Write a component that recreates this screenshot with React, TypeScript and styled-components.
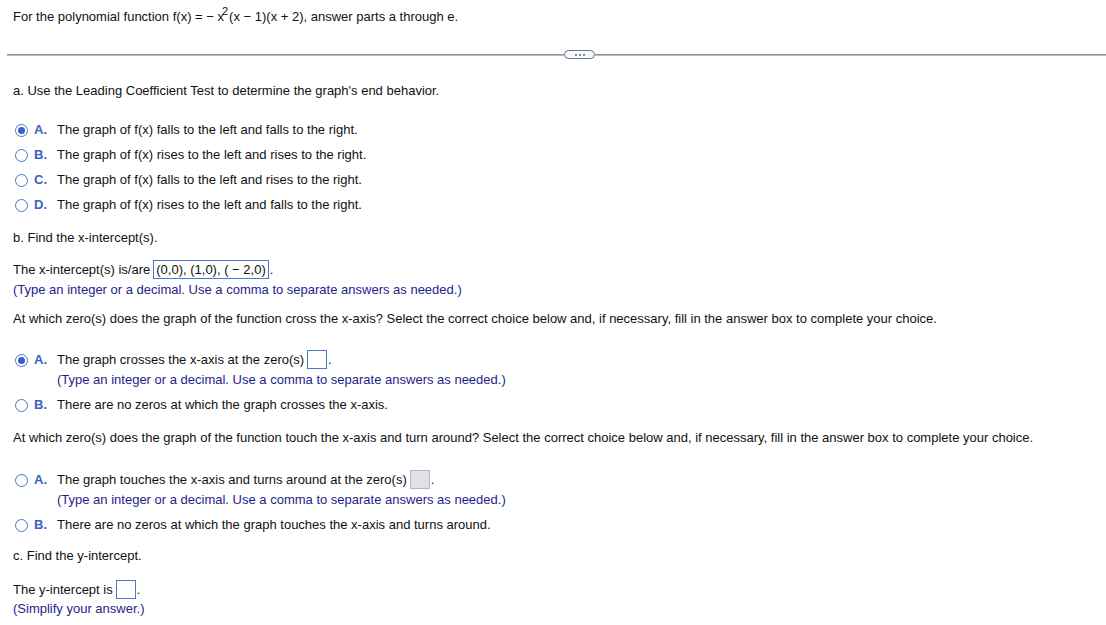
import React from "react";
import styled, { createGlobalStyle } from "styled-components";

const Global = createGlobalStyle`
  html, body { margin: 0; padding: 0; background: #fff; }
  body { font-family: "Liberation Sans", Arial, sans-serif; font-size: 13px; color: #111; }
`;

const Page = styled.div`
  padding: 7px 0 0 13px;
  width: 1106px;
  box-sizing: border-box;
`;

const Line = styled.div<{ $mt?: number }>`
  line-height: 20px;
  height: 20px;
  margin-top: ${(p) => p.$mt ?? 0}px;
  white-space: nowrap;
`;

const Hint = styled(Line)`
  color: #25238a;
`;

const Sup = styled.sup`
  font-size: 11px;
  vertical-align: 6px;
  line-height: 0;
  margin-left: -2px;
  margin-right: 1px;
`;

const Divider = styled.div`
  display: grid;
  grid-template-columns: 557px 31px 1fr;
  align-items: center;
  margin: 23px 0 0 -6px;
  height: 9px;
`;

const Rule = styled.div`
  height: 1px;
  background: #8a92a0;
  border-bottom: 0.5px solid #b4bac4;
`;

const Pill = styled.div`
  height: 7px;
  border: 1px solid #6c7686;
  border-radius: 5px;
  background: #f8f9fb;
  display: flex;
  align-items: center;
  justify-content: center;
  gap: 2px;
`;

const Dot = styled.span`
  width: 2px;
  height: 2px;
  background: #5d6676;
  border-radius: 1px;
`;

const Options = styled.div<{ $mt?: number }>`
  display: flex;
  flex-direction: column;
  gap: 5px;
  margin-top: ${(p) => p.$mt ?? 0}px;
`;

const Option = styled.div`
  display: grid;
  grid-template-columns: 13px 29px 1fr;
  grid-auto-rows: 20px;
  margin-left: 2px;
  line-height: 20px;
  white-space: nowrap;
`;

const RadioCell = styled.div`
  display: flex;
  align-items: center;
  height: 20px;
  grid-column: 1;
`;

const Radio = styled.span<{ $on?: boolean }>`
  width: 11px;
  height: 11px;
  border: 1px solid #4a74cf;
  border-radius: 50%;
  box-sizing: content-box;
  display: flex;
  align-items: center;
  justify-content: center;
  background: #fff;
  &::after {
    content: "";
    display: ${(p) => (p.$on ? "block" : "none")};
    width: 7px;
    height: 7px;
    border-radius: 50%;
    background: #3460c8;
  }
`;

const Letter = styled.span`
  grid-column: 2;
  padding-left: 6px;
  color: #3a63c0;
  font-weight: bold;
`;

const OptText = styled.span`
  grid-column: 3;
`;

const OptHint = styled.span`
  grid-column: 3;
  color: #25238a;
`;

const AnswerBox = styled.span<{ $disabled?: boolean }>`
  display: inline-block;
  vertical-align: middle;
  min-width: 14px;
  height: 17px;
  line-height: 17px;
  padding: 0 2px;
  margin: -2px 1px 0 3px;
  border: 1px solid ${(p) => (p.$disabled ? "#a9b6dd" : "#4a78c8")};
  background: ${(p) => (p.$disabled ? "#e1e1e1" : "#fff")};
`;

type Opt = { letter: string; text: React.ReactNode; on?: boolean; hint?: string };

const OptionList: React.FC<{ items: Opt[]; mt?: number }> = ({ items, mt }) => (
  <Options $mt={mt}>
    {items.map((o) => (
      <Option key={o.letter}>
        <RadioCell>
          <Radio $on={o.on} />
        </RadioCell>
        <Letter>{o.letter}.</Letter>
        <OptText>{o.text}</OptText>
        {o.hint && <OptHint>{o.hint}</OptHint>}
      </Option>
    ))}
  </Options>
);

const hintText = "(Type an integer or a decimal. Use a comma to separate answers as needed.)";

export default function App() {
  return (
    <>
      <Global />
      <Page>
        <Line>
          For the polynomial function f(x) = − x<Sup>2</Sup>(x − 1)(x + 2), answer parts a through e.
        </Line>
        <Divider>
          <Rule />
          <Pill>
            <Dot />
            <Dot />
            <Dot />
          </Pill>
          <Rule />
        </Divider>
        <Line $mt={22}>a. Use the Leading Coefficient Test to determine the graph's end behavior.</Line>
        <OptionList
          mt={19}
          items={[
            { letter: "A", on: true, text: "The graph of f(x) falls to the left and falls to the right." },
            { letter: "B", text: "The graph of f(x) rises to the left and rises to the right." },
            { letter: "C", text: "The graph of f(x) falls to the left and rises to the right." },
            { letter: "D", text: "The graph of f(x) rises to the left and falls to the right." },
          ]}
        />
        <Line $mt={13}>b. Find the x-intercept(s).</Line>
        <Line $mt={12}>
          The x-intercept(s) is/are<AnswerBox>(0,0), (1,0), ( − 2,0)</AnswerBox>.
        </Line>
        <Hint>{hintText}</Hint>
        <Line $mt={9}>
          At which zero(s) does the graph of the function cross the x-axis? Select the correct choice below and, if necessary, fill in the answer box to complete your choice.
        </Line>
        <OptionList
          mt={21}
          items={[
            {
              letter: "A",
              on: true,
              text: (
                <>
                  The graph crosses the x-axis at the zero(s)<AnswerBox />.
                </>
              ),
              hint: hintText,
            },
            { letter: "B", text: "There are no zeros at which the graph crosses the x-axis." },
          ]}
        />
        <Line $mt={13}>
          At which zero(s) does the graph of the function touch the x-axis and turn around? Select the correct choice below and, if necessary, fill in the answer box to complete your choice.
        </Line>
        <OptionList
          mt={22}
          items={[
            {
              letter: "A",
              text: (
                <>
                  The graph touches the x-axis and turns around at the zero(s)<AnswerBox $disabled />.
                </>
              ),
              hint: hintText,
            },
            { letter: "B", text: "There are no zeros at which the graph touches the x-axis and turns around." },
          ]}
        />
        <Line $mt={11}>c. Find the y-intercept.</Line>
        <Line $mt={14}>
          The y-intercept is<AnswerBox />.
        </Line>
        <Hint $mt={-1}>(Simplify your answer.)</Hint>
      </Page>
    </>
  );
}
